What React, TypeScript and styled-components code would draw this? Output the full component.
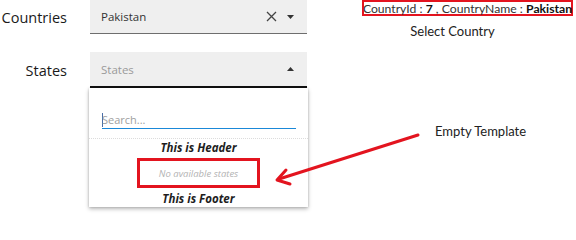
import React from "react";
import styled, { createGlobalStyle } from "styled-components";

const Global = createGlobalStyle`
  html, body { margin: 0; padding: 0; background: #fff; }
  body { width: 576px; height: 216px; overflow: hidden; }
`;

const Page = styled.div`
  position: relative;
  width: 576px;
  height: 216px;
  overflow: hidden;
  display: flex;
  align-items: flex-start;
  font-family: "Open Sans", "Noto Sans", sans-serif;
`;

const Form = styled.div`
  display: grid;
  grid-template-columns: 67px 217px;
  column-gap: 23px;
  row-gap: 18px;
  align-items: start;
`;

const Label = styled.div<{ $h: number }>`
  height: ${(p) => p.$h}px;
  display: flex;
  align-items: center;
  justify-content: flex-end;
  font-size: 14.5px;
  font-weight: 500;
  color: #1a1a1a;
`;

const Field = styled.div<{ $focused?: boolean }>`
  box-sizing: border-box;
  height: ${(p) => (p.$focused ? 36 : 34)}px;
  background: #efefef;
  border-bottom: ${(p) => (p.$focused ? "2px solid #111" : "1px solid #6e6e6e")};
  display: flex;
  align-items: center;
  padding: 0 13px 0 11px;
  font-size: 11.5px;
`;

const Value = styled.span<{ $placeholder?: boolean }>`
  flex: 1;
  color: ${(p) => (p.$placeholder ? "#9a9a9a" : "#333")};
`;

const IconBox = styled.span`
  display: flex;
  align-items: center;
  gap: 10px;
`;

const Popup = styled.div`
  grid-column: 2;
  margin-top: -18px;
  margin-left: -1px;
  width: 219px;
  height: 119px;
  background: #fff;
  box-shadow: 0 2px 4px rgba(0, 0, 0, 0.28), 0 0 2px rgba(0, 0, 0, 0.18);
  display: flex;
  flex-direction: column;
  align-items: center;
`;

const SearchWrap = styled.div`
  align-self: stretch;
  padding: 23px 12px 0 13px;
`;

const SearchInput = styled.div`
  height: 17px;
  border-bottom: 1.5px solid #1a88d8;
  display: flex;
  align-items: center;
  font-size: 11px;
  color: #a0a0a0;
`;

const Caret = styled.span`
  width: 1px;
  height: 14px;
  background: #4a6ea8;
  margin-right: -1px;
`;

const Separator = styled.div`
  align-self: stretch;
  margin-top: 9px;
  border-top: 1px dotted #dcdcdc;
`;

const Template = styled.div`
  font-size: 11.5px;
  font-weight: 700;
  font-style: italic;
  color: #1e1e1e;
  line-height: 17px;
`;

const EmptyBox = styled.div`
  margin: 2px 0 2px;
  width: 117px;
  height: 29px;
  border: 3px solid #e3141f;
  display: flex;
  align-items: center;
  justify-content: center;
  font-size: 9.5px;
  font-style: italic;
  color: #b3b3b3;
`;

const Side = styled.div`
  margin-left: 55px;
  display: flex;
  flex-direction: column;
  align-items: center;
  font-family: Lato, "Open Sans", sans-serif;
`;

const InfoBox = styled.div`
  width: 207px;
  height: 12px;
  border: 2px solid #e3141f;
  display: flex;
  align-items: center;
  justify-content: center;
  font-size: 12.2px;
  color: #333;
  white-space: nowrap;
`;

const Bold = styled.b`
  color: #111;
`;

const Caption = styled.div`
  margin-top: 7px;
  margin-right: 30px;
  font-size: 13px;
  color: #222;
`;

const Note = styled.div`
  position: absolute;
  left: 435px;
  top: 123px;
  font-family: Lato, "Open Sans", sans-serif;
  font-size: 13px;
  color: #222;
`;

const Arrow = styled.svg`
  position: absolute;
  left: 0;
  top: 0;
  pointer-events: none;
`;

const ClearIcon = () => (
  <svg width="11" height="11" viewBox="0 0 11 11">
    <path d="M1 1 L10 10 M10 1 L1 10" stroke="#444" strokeWidth="1.3" />
  </svg>
);

const Tri = ({ up }: { up?: boolean }) => (
  <svg width="7" height="4" viewBox="0 0 7 4">
    <path d={up ? "M0 4 L3.5 0 L7 4 Z" : "M0 0 L3.5 4 L7 0 Z"} fill="#333" />
  </svg>
);

export default function App() {
  return (
    <>
      <Global />
      <Page>
        <Form>
          <Label $h={34}>Countries</Label>
          <Field>
            <Value>Pakistan</Value>
            <IconBox>
              <ClearIcon />
              <Tri />
            </IconBox>
          </Field>
          <Label $h={36}>States</Label>
          <Field $focused>
            <Value $placeholder>States</Value>
            <IconBox>
              <Tri up />
            </IconBox>
          </Field>
          <Popup>
            <SearchWrap>
              <SearchInput>
                <Caret />
                Search...
              </SearchInput>
            </SearchWrap>
            <Separator />
            <Template>This is Header</Template>
            <EmptyBox>No available states</EmptyBox>
            <Template>This is Footer</Template>
          </Popup>
        </Form>
        <Side>
          <InfoBox>
            CountryId :&nbsp;<Bold>7</Bold>&nbsp;, CountryName :&nbsp;<Bold>Pakistan</Bold>
          </InfoBox>
          <Caption>Select Country</Caption>
        </Side>
        <Note>Empty Template</Note>
        <Arrow width="576" height="216" viewBox="0 0 576 216">
          <path d="M418 135 L279 179" stroke="#e3141f" strokeWidth="3" strokeLinecap="round" fill="none" />
          <path d="M286 170 L277 180 L290 184" stroke="#e3141f" strokeWidth="3" strokeLinecap="round" strokeLinejoin="round" fill="none" />
        </Arrow>
      </Page>
    </>
  );
}
